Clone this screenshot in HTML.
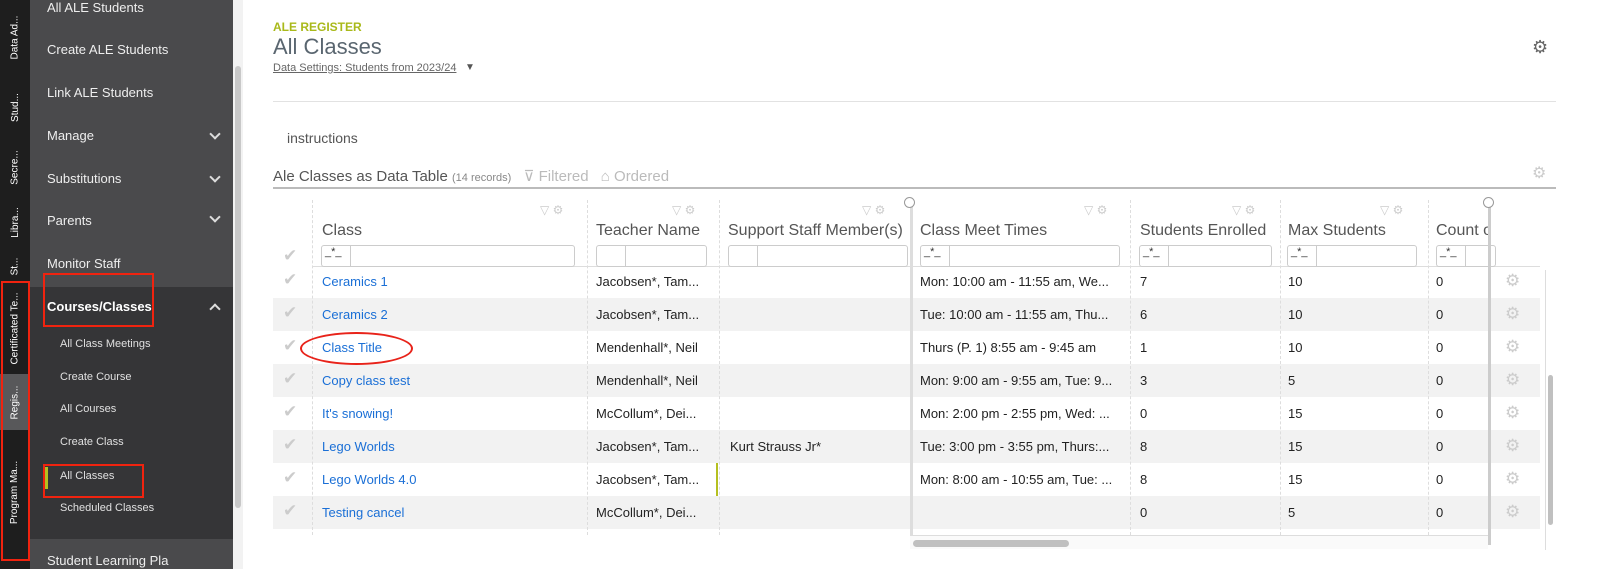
<!DOCTYPE html>
<html><head><meta charset="utf-8"><style>
*{margin:0;padding:0;box-sizing:border-box}
body{width:1600px;height:569px;overflow:hidden;background:#fff;font-family:"Liberation Sans",sans-serif;position:relative}
.a{position:absolute}
.tabs{left:0;top:0;width:30px;height:569px;background:#1e1e1e}
.tab{position:absolute;left:0;width:30px;color:#fff;font-size:10px;display:flex;align-items:center;justify-content:center}
.tab span{transform:rotate(-90deg);white-space:nowrap;display:block}
.nav{left:30px;top:0;width:203px;height:569px;background:#4a4a4c}
.ni{position:absolute;left:17px;color:#eee;font-size:13px}
.chev{position:absolute;left:181px;width:8px;height:8px;border-right:2px solid #ddd;border-bottom:2px solid #ddd;transform:rotate(45deg)}
.sub{position:absolute;left:30px;color:#e0e0e0;font-size:11px}
.red{position:absolute;border:2px solid #f0230f}
.th{position:absolute;top:222px;font-size:16px;color:#555;white-space:nowrap;overflow:hidden}
.inp{position:absolute;top:245px;height:22px;border:1px solid #ccc;border-radius:3px;font-size:11px;color:#333;padding-left:3px}
.inp i{position:absolute;left:28px;top:0;bottom:0;border-left:1px solid #ccc}
.row{position:absolute;left:273px;width:1267px;height:33px}
.c{position:absolute;font-size:13px;color:#222;white-space:nowrap;top:9px}
.lnk{color:#1a6fd6}
.vl{position:absolute;top:200px;height:335px;border-left:1px dashed #ddd}
.chk{position:absolute;left:10px;color:#ccc;font-size:17px;top:5px}
.gear{position:absolute;color:#ccc;font-size:17px}
.hicon{position:absolute;top:203px;color:#ccc;font-size:12px}
</style></head><body>
<div class="a tabs">
<div class="tab" style="top:0;height:75px"><span>Data Ad...</span></div>
<div class="tab" style="top:75px;height:65px"><span>Stud...</span></div>
<div class="tab" style="top:140px;height:55px"><span>Secre...</span></div>
<div class="tab" style="top:195px;height:55px"><span>Libra...</span></div>
<div class="tab" style="top:250px;height:32px"><span>St...</span></div>
<div class="tab" style="top:282px;height:92px"><span>Certificated Te...</span></div>
<div class="tab" style="top:374px;height:56px;background:#58585a"><span>Regis...</span></div>
<div class="tab" style="top:430px;height:125px"><span>Program Ma...</span></div>
</div>
<div class="red" style="left:1px;top:281px;width:29px;height:280px"></div>
<div class="a nav">
<div class="ni" style="top:0">All ALE Students</div>
<div class="ni" style="top:42px">Create ALE Students</div>
<div class="ni" style="top:85px">Link ALE Students</div>
<div class="ni" style="top:128px">Manage</div><div class="chev" style="top:130px"></div>
<div class="ni" style="top:171px">Substitutions</div><div class="chev" style="top:173px"></div>
<div class="ni" style="top:213px">Parents</div><div class="chev" style="top:213px"></div>
<div class="ni" style="top:256px">Monitor Staff</div>
<div class="a" style="left:0;top:287px;width:203px;height:252px;background:#353537"></div>
<div class="ni" style="top:299px;font-weight:bold;color:#fff">Courses/Classes</div>
<div class="chev" style="top:305px;transform:rotate(225deg)"></div>
<div class="sub" style="top:338px">All Class Meetings</div>
<div class="sub" style="top:371px">Create Course</div>
<div class="sub" style="top:403px">All Courses</div>
<div class="sub" style="top:436px">Create Class</div>
<div class="a" style="left:15px;top:467px;width:3px;height:22px;background:#b5c020"></div>
<div class="sub" style="top:470px">All Classes</div>
<div class="sub" style="top:502px">Scheduled Classes</div>
<div class="ni" style="top:553px">Student Learning Pla</div>
</div>
<div class="a" style="left:233px;top:0;width:10px;height:569px;background:#f2f2f2"></div>
<div class="a" style="left:235px;top:66px;width:6px;height:442px;background:#c8c8c8;border-radius:3px"></div>
<div class="red" style="left:43px;top:273px;width:111px;height:54px"></div>
<div class="red" style="left:43px;top:464px;width:101px;height:34px"></div>

<div class="a" style="left:273px;top:20px;font-size:12px;font-weight:bold;color:#a9b91a">ALE REGISTER</div>
<div class="a" style="left:273px;top:34px;font-size:22px;color:#5a6670">All Classes</div>
<div class="a" style="left:273px;top:62px;font-size:11px;color:#666;text-decoration:underline">Data Settings: Students from 2023/24</div>
<div class="a" style="left:465px;top:62px;font-size:10px;color:#555">▼</div>
<div class="a" style="left:1532px;top:37px;font-size:18px;color:#666">⚙</div>
<div class="a" style="left:273px;top:101px;width:1283px;border-top:1px solid #e2e2e2"></div>
<div class="a" style="left:287px;top:130px;font-size:14px;color:#555">instructions</div>
<div class="a" style="left:273px;top:167px;font-size:15px;color:#555;white-space:nowrap">Ale Classes as Data Table <span style="font-size:11px;color:#888">(14 records)</span> <span style="color:#bbb;margin-left:8px">⊽ Filtered</span> <span style="color:#bbb;margin-left:8px">⌂ Ordered</span></div>
<div class="a" style="left:1532px;top:163px;font-size:16px;color:#ccc">⚙</div>
<div class="a" style="left:273px;top:187px;width:1283px;border-top:2px solid #bbb"></div>

<div class="row" style="top:265px"></div>
<div class="row" style="top:298px;background:#f2f2f2"></div>
<div class="row" style="top:364px;background:#f2f2f2"></div>
<div class="row" style="top:430px;background:#f2f2f2"></div>
<div class="row" style="top:496px;background:#f2f2f2"></div>
<div class="a" style="left:312px;top:266px;width:1228px;border-top:1px solid #ddd"></div>

<div class="vl" style="left:312px"></div><div class="vl" style="left:587px"></div><div class="vl" style="left:719px"></div>
<div class="vl" style="left:910px"></div><div class="vl" style="left:1130px"></div><div class="vl" style="left:1280px"></div><div class="vl" style="left:1428px"></div>

<div class="th" style="left:322px">Class</div>
<div class="th" style="left:596px">Teacher Name</div>
<div class="th" style="left:728px;width:178px">Support Staff Member(s)</div>
<div class="th" style="left:920px">Class Meet Times</div>
<div class="th" style="left:1140px;width:132px">Students Enrolled</div>
<div class="th" style="left:1288px">Max Students</div>
<div class="th" style="left:1436px;width:54px">Count of</div>
<div class="hicon" style="left:540px">▽ ⚙</div>
<div class="hicon" style="left:672px">▽ ⚙</div>
<div class="hicon" style="left:862px">▽ ⚙</div>
<div class="hicon" style="left:1084px">▽ ⚙</div>
<div class="hicon" style="left:1232px">▽ ⚙</div>
<div class="hicon" style="left:1380px">▽ ⚙</div>
<div class="inp" style="left:321px;width:254px">_*_<i></i></div>
<div class="inp" style="left:596px;width:111px"><i></i></div>
<div class="inp" style="left:728px;width:180px"><i></i></div>
<div class="inp" style="left:920px;width:200px">_*_<i></i></div>
<div class="inp" style="left:1139px;width:133px">_*_<i></i></div>
<div class="inp" style="left:1287px;width:130px">_*_<i></i></div>
<div class="inp" style="left:1436px;width:60px">_*_<i></i></div>
<div class="chk a" style="left:283px;top:246px;color:#ccc;font-size:17px">✔</div>

<div class="a" style="left:910px;top:200px;width:3px;height:345px;background:#ddd"></div>
<div class="a" style="left:904px;top:197px;width:11px;height:11px;border:1px solid #999;border-radius:50%;background:#fff"></div>
<div class="a" style="left:1488px;top:200px;width:3px;height:345px;background:#ccc"></div>
<div class="a" style="left:1483px;top:197px;width:11px;height:11px;border:1px solid #999;border-radius:50%;background:#fff"></div>

<div class="row" style="top:265px"><span class="chk">✔</span><span class="c lnk" style="left:49px">Ceramics 1</span><span class="c" style="left:323px">Jacobsen*, Tam...</span><span class="c" style="left:647px">Mon: 10:00 am - 11:55 am, We...</span><span class="c" style="left:867px">7</span><span class="c" style="left:1015px">10</span><span class="c" style="left:1163px">0</span><span class="gear" style="left:1232px;top:6px">⚙</span></div>
<div class="row" style="top:298px"><span class="chk">✔</span><span class="c lnk" style="left:49px">Ceramics 2</span><span class="c" style="left:323px">Jacobsen*, Tam...</span><span class="c" style="left:647px">Tue: 10:00 am - 11:55 am, Thu...</span><span class="c" style="left:867px">6</span><span class="c" style="left:1015px">10</span><span class="c" style="left:1163px">0</span><span class="gear" style="left:1232px;top:6px">⚙</span></div>
<div class="row" style="top:331px"><span class="chk">✔</span><span class="c lnk" style="left:49px">Class Title</span><span class="c" style="left:323px">Mendenhall*, Neil</span><span class="c" style="left:647px">Thurs (P. 1) 8:55 am - 9:45 am</span><span class="c" style="left:867px">1</span><span class="c" style="left:1015px">10</span><span class="c" style="left:1163px">0</span><span class="gear" style="left:1232px;top:6px">⚙</span></div>
<div class="row" style="top:364px"><span class="chk">✔</span><span class="c lnk" style="left:49px">Copy class test</span><span class="c" style="left:323px">Mendenhall*, Neil</span><span class="c" style="left:647px">Mon: 9:00 am - 9:55 am, Tue: 9...</span><span class="c" style="left:867px">3</span><span class="c" style="left:1015px">5</span><span class="c" style="left:1163px">0</span><span class="gear" style="left:1232px;top:6px">⚙</span></div>
<div class="row" style="top:397px"><span class="chk">✔</span><span class="c lnk" style="left:49px">It's snowing!</span><span class="c" style="left:323px">McCollum*, Dei...</span><span class="c" style="left:647px">Mon: 2:00 pm - 2:55 pm, Wed: ...</span><span class="c" style="left:867px">0</span><span class="c" style="left:1015px">15</span><span class="c" style="left:1163px">0</span><span class="gear" style="left:1232px;top:6px">⚙</span></div>
<div class="row" style="top:430px"><span class="chk">✔</span><span class="c lnk" style="left:49px">Lego Worlds</span><span class="c" style="left:323px">Jacobsen*, Tam...</span><span class="c" style="left:457px">Kurt Strauss Jr*</span><span class="c" style="left:647px">Tue: 3:00 pm - 3:55 pm, Thurs:...</span><span class="c" style="left:867px">8</span><span class="c" style="left:1015px">15</span><span class="c" style="left:1163px">0</span><span class="gear" style="left:1232px;top:6px">⚙</span></div>
<div class="row" style="top:463px"><span class="chk">✔</span><span class="c lnk" style="left:49px">Lego Worlds 4.0</span><span class="c" style="left:323px">Jacobsen*, Tam...</span><span class="c" style="left:647px">Mon: 8:00 am - 10:55 am, Tue: ...</span><span class="c" style="left:867px">8</span><span class="c" style="left:1015px">15</span><span class="c" style="left:1163px">0</span><span class="gear" style="left:1232px;top:6px">⚙</span></div>
<div class="row" style="top:496px"><span class="chk">✔</span><span class="c lnk" style="left:49px">Testing cancel</span><span class="c" style="left:323px">McCollum*, Dei...</span><span class="c" style="left:867px">0</span><span class="c" style="left:1015px">5</span><span class="c" style="left:1163px">0</span><span class="gear" style="left:1232px;top:6px">⚙</span></div>

<div class="a" style="left:300px;top:332px;width:113px;height:33px;border:2px solid #e8231a;border-radius:50%"></div>
<div class="a" style="left:716px;top:463px;width:2px;height:33px;background:#b5c020"></div>
<div class="a" style="left:910px;top:535px;width:578px;height:14px;border-top:1px solid #ddd;background:#fafafa"></div>
<div class="a" style="left:913px;top:540px;width:156px;height:7px;border-radius:4px;background:#c0c0c0"></div>
<div class="a" style="left:1545px;top:270px;width:11px;height:280px;border-left:1px solid #ddd"></div>
<div class="a" style="left:1548px;top:375px;width:5px;height:150px;border-radius:3px;background:#c0c0c0"></div>
</body></html>
